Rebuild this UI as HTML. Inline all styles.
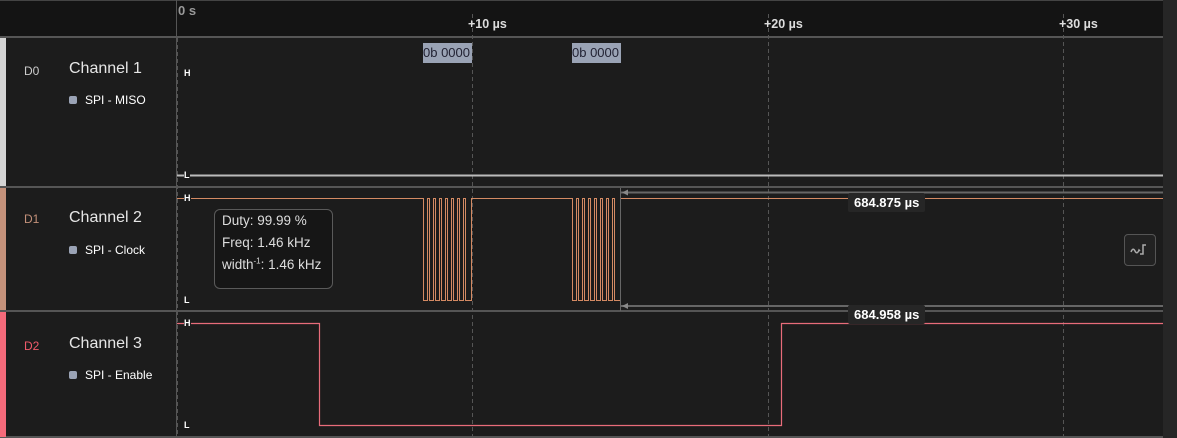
<!DOCTYPE html>
<html><head><meta charset="utf-8"><style>
body{margin:0;width:1177px;height:438px;background:#1c1c1c;overflow:hidden;font-family:"Liberation Sans",sans-serif;position:relative}
.abs{position:absolute}
.d{font-size:12px}
.ch{font-size:16px;color:#e6e6e6}
.sub{font-size:12px;color:#fff}
.sq{display:inline-block;width:8px;height:8px;background:#9aa3b5;border-radius:2px;margin-right:8px;vertical-align:-0px}
</style></head><body>
<div class="abs" style="left:0;top:0;width:1177px;height:37px;background:#141414"></div>
<div class="abs" style="left:0;top:0;width:1177px;height:1px;background:#444"></div>
<svg class="abs" style="left:0;top:0" width="1177" height="438">
<g stroke="#555" stroke-width="2"><line x1="0" y1="37" x2="1163" y2="37"/><line x1="0" y1="187" x2="1163" y2="187"/><line x1="0" y1="311" x2="1163" y2="311"/><line x1="0" y1="437" x2="1163" y2="437"/></g>
<line x1="176.5" y1="0" x2="176.5" y2="438" stroke="#555"/>
<rect x="0" y="38" width="6" height="148" fill="#d4d4d4"/>
<rect x="0" y="188" width="6" height="122" fill="#c4917a"/>
<rect x="0" y="312" width="6" height="125" fill="#f46a7a"/>
<g stroke="#555" stroke-dasharray="4,3"><line x1="177.5" y1="38" x2="177.5" y2="438"/><line x1="472.5" y1="14" x2="472.5" y2="438"/><line x1="768.5" y1="14" x2="768.5" y2="438"/><line x1="1063.5" y1="14" x2="1063.5" y2="438"/></g>
<line x1="177" y1="175.5" x2="1163" y2="175.5" stroke="#bbb" stroke-width="2"/>
<path d="M177 198.5H423.5V300.5H427.5V198.5H429.5V300.5H433.5V198.5H435.5V300.5H439.5V198.5H441.5V300.5H445.5V198.5H447.5V300.5H451.5V198.5H453.5V300.5H457.5V198.5H459.5V300.5H463.5V198.5H465.5V300.5H471.5V198.5H572.5V300.5H576.5V198.5H578.5V300.5H582.5V198.5H584.5V300.5H588.5V198.5H590.5V300.5H594.5V198.5H596.5V300.5H600.5V198.5H602.5V300.5H606.5V198.5H608.5V300.5H612.5V198.5H614.5V300.5H620.5V198.5H1163" fill="none" stroke="#d48a63" stroke-width="1"/>
<path d="M177 323.5H319.5V425.5H781.5V323.5H1163" fill="none" stroke="#e86c7a" stroke-width="1.2"/>
<g stroke="#666" stroke-width="2"><line x1="621" y1="192.5" x2="1163" y2="192.5"/><line x1="621" y1="306" x2="1163" y2="306"/></g>
<line x1="620.5" y1="188" x2="620.5" y2="311" stroke="#666"/>
<path d="M622 192.5l6-3v6z M622 306l6-3v6z" fill="#888"/>
<rect x="1163" y="0" width="14" height="438" fill="#262626"/>
</svg>
<div class="abs" style="left:178px;top:3px;font-size:13px;font-weight:bold;color:#999">0 s</div>
<div class="abs" style="left:468px;top:17px;font-size:12.5px;font-weight:bold;color:#ddd">+10 µs</div>
<div class="abs" style="left:764px;top:17px;font-size:12.5px;font-weight:bold;color:#ddd">+20 µs</div>
<div class="abs" style="left:1059px;top:17px;font-size:12.5px;font-weight:bold;color:#ddd">+30 µs</div>
<div class="abs" style="left:423px;top:43px;width:49px;height:20px;background:#9aa3b5;color:#223;font-size:13px;line-height:20px;overflow:hidden;white-space:nowrap">0b 0000</div>
<div class="abs" style="left:572px;top:43px;width:49px;height:20px;background:#9aa3b5;color:#223;font-size:13px;line-height:20px;overflow:hidden;white-space:nowrap">0b 0000</div>
<div class="abs d" style="left:24px;top:64px;color:#ccc">D0</div>
<div class="abs ch" style="left:69px;top:60px">Channel 1</div>
<div class="abs sub" style="left:69px;top:93px"><span class="sq"></span>SPI - MISO</div>
<div class="abs d" style="left:24px;top:212px;color:#c4917a">D1</div>
<div class="abs ch" style="left:69px;top:209px">Channel 2</div>
<div class="abs sub" style="left:69px;top:243px"><span class="sq"></span>SPI - Clock</div>
<div class="abs d" style="left:24px;top:339px;color:#f05a6a">D2</div>
<div class="abs ch" style="left:69px;top:335px">Channel 3</div>
<div class="abs sub" style="left:69px;top:368px"><span class="sq"></span>SPI - Enable</div>
<div class="abs" style="left:184px;top:68px;font-size:9px;font-weight:bold;color:#fff">H</div>
<div class="abs" style="left:184px;top:170px;font-size:9px;font-weight:bold;color:#fff;background:#1c1c1c">L</div>
<div class="abs" style="left:184px;top:193px;font-size:9px;font-weight:bold;color:#fff;background:#1c1c1c">H</div>
<div class="abs" style="left:184px;top:295px;font-size:9px;font-weight:bold;color:#fff">L</div>
<div class="abs" style="left:184px;top:318px;font-size:9px;font-weight:bold;color:#fff;background:#1c1c1c">H</div>
<div class="abs" style="left:184px;top:420px;font-size:9px;font-weight:bold;color:#fff">L</div>
<div class="abs" style="left:214px;top:209px;width:119px;height:80px;padding:0 0 0 7px;box-sizing:border-box;border:1px solid #5a5a5a;border-radius:6px;background:#161616;color:#ddd;font-size:13.5px;line-height:22px;padding-top:0px">Duty: 99.99 %<br>Freq: 1.46 kHz<br>width<sup style="font-size:8px;line-height:0">-1</sup>: 1.46 kHz</div>
<div class="abs" style="left:848px;top:193px;padding:0 6px;height:19px;background:#262626;color:#fff;font-size:13px;font-weight:bold;line-height:19px;border-radius:2px">684.875 µs</div>
<div class="abs" style="left:848px;top:305px;padding:0 6px;height:19px;background:#262626;color:#fff;font-size:13px;font-weight:bold;line-height:19px;border-radius:2px">684.958 µs</div>
<div class="abs" style="left:1124px;top:234px;width:30px;height:30px;border:1px solid #555;border-radius:4px;background:#222"></div>
<svg class="abs" style="left:1124px;top:234px" width="32" height="32"><path d="M7 18q2-5 4-1t4-1l1 1M16 20h3v-9h3" fill="none" stroke="#aaa" stroke-width="1.5"/></svg>
</body></html>
